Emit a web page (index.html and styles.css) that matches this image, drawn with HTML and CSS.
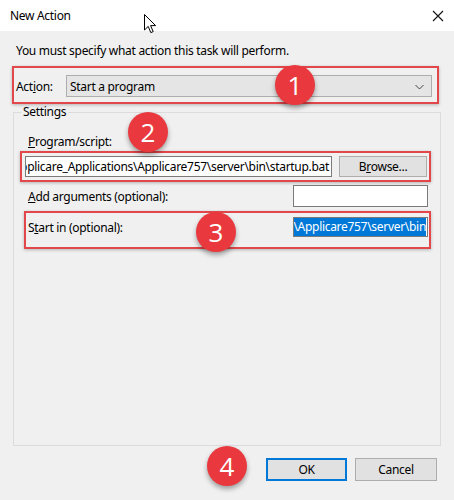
FILE: index.html
```html
<!DOCTYPE html>
<html>
<head>
<meta charset="utf-8">
<link rel="stylesheet" href="styles.css">
</head>
<body>
<div class="window">
  <div class="titlebar">
    <span class="title">New Action</span>
    <svg class="close" width="12" height="12" viewBox="0 0 12 12"><path d="M1 1 L11 11 M11 1 L1 11" stroke="#111" stroke-width="1.1" fill="none"/></svg>
  </div>
  <div class="content">
    <p class="intro">You must specify what action this task will perform.</p>
    <div class="annot annot-action">
      <span class="lbl">Act<u>i</u>on:</span>
      <div class="select">
        <span>Start a program</span>
        <svg class="chev" width="9" height="6" viewBox="0 0 9 6"><path d="M0.5 1 L4.5 5 L8.5 1" stroke="#444" stroke-width="1" fill="none"/></svg>
      </div>
    </div>
    <fieldset class="settings">
      <legend>Settings</legend>
      <div class="field-label"><u>P</u>rogram/script:</div>
      <div class="annot annot-program">
        <div class="textbox prog"><span>C:\Applicare_Applications\Applicare757\server\bin\startup.bat</span></div>
        <div class="btn browse">B<u>r</u>owse...</div>
      </div>
      <div class="row args">
        <span class="lbl"><u>A</u>dd arguments (optional):</span>
        <div class="textbox small"></div>
      </div>
      <div class="annot row startin">
        <span class="lbl">S<u>t</u>art in (optional):</span>
        <div class="textbox small sel"><span class="hl">C:\Applicare_Applications\Applicare757\server\bin</span></div>
      </div>
    </fieldset>
    <div class="buttons">
      <div class="btn ok">OK</div>
      <div class="btn cancel">Cancel</div>
    </div>
  </div>
  <div class="badge b1">1</div>
  <div class="badge b2">2</div>
  <div class="badge b3">3</div>
  <div class="badge b4">4</div>
  <svg class="cursor" width="13" height="20" viewBox="0 0 13 20"><path d="M0.5 0.5 L0.5 16 L4.2 12.4 L6.8 18.6 L9.2 17.6 L6.6 11.6 L11.6 11.6 Z" fill="#fff" stroke="#000" stroke-width="1"/></svg>
</div>
</body>
</html>
```

FILE: styles.css
```css
* { box-sizing: border-box; }
html, body { margin: 0; padding: 0; }
body {
  width: 454px;
  height: 500px;
  overflow: hidden;
  background: #f0f0f0;
  font-family: "Noto Sans", "Open Sans", sans-serif;
  font-size: 12px;
  letter-spacing: -0.3px;
  color: #000;
}
.window { position: relative; width: 454px; height: 500px; }
u { text-decoration: underline; text-underline-offset: 1px; }

.titlebar {
  height: 31px;
  background: #fff;
  display: flex;
  align-items: center;
  justify-content: space-between;
  padding: 0 10px 0 10px;
}
.title { font-size: 12px; line-height: 16px; }

.content { padding: 12px 0 0 12px; }
.intro { margin: 0 0 7px 4px; line-height: 16px; }

.annot {
  border: 2px solid #e2474b;
  box-shadow: 0 1px 3px rgba(0,0,0,0.25);
}
.annot-action {
  width: 427px;
  height: 38px;
  display: flex;
  align-items: center;
  padding: 2px 5px 0 2px;
}
.annot-action .lbl { width: 50px; }
.select {
  flex: 1;
  height: 22px;
  background: #e5e5e5;
  border: 1px solid #adadad;
  display: flex;
  align-items: center;
  justify-content: space-between;
  padding: 0 7px 0 3px;
}
.chev { margin-top: 1px; }

.settings {
  margin: 0 0 0 1px;
  width: 428px;
  border: 1px solid #dcdcdc;
  padding: 0 0 196px 0;
  min-width: 0;
}
.settings legend {
  margin-left: 7px;
  padding: 0 2px;
  line-height: 16px;
}
.field-label { margin: 14px 0 1px 14px; line-height: 16px; }

.annot-program {
  margin-left: 6px;
  width: 411px;
  height: 31px;
  display: flex;
  align-items: center;
  gap: 7px;
  padding: 0 2px 0 3px;
}
.textbox {
  background: #fff;
  border: 1px solid #7a7a7a;
  height: 21px;
  display: flex;
  justify-content: flex-end;
  align-items: center;
  overflow: hidden;
  white-space: nowrap;
  padding: 0 2px;
}
.prog { width: 307px; }
.btn {
  background: #e1e1e1;
  border: 1px solid #adadad;
  display: flex;
  align-items: center;
  justify-content: center;
  height: 21px;
}
.browse { width: 88px; }

.row { display: flex; align-items: center; justify-content: space-between; }
.args {
  margin: 3px 0 0 14px;
  width: 400px;
  height: 22px;
}
.args .textbox { width: 135px; height: 22px; }
.startin {
  margin: 4px 0 0 10px;
  width: 407px;
  height: 38px;
  padding: 2px 1px 8px 2px;
}
.startin .textbox { width: 135px; height: 20px; padding: 0 1px; }
.hl { background: #0078d7; color: #fff; line-height: 18px; }

.buttons {
  display: flex;
  justify-content: flex-end;
  gap: 8px;
  margin: 12px 17px 0 0;
}
.ok { width: 81px; height: 23px; border: 2px solid #0078d7; }
.cancel { width: 82px; height: 23px; }

.badge {
  position: absolute;
  width: 40px;
  height: 40px;
  border-radius: 50%;
  background: #e9393e;
  color: #fff;
  font-family: "Open Sans", "Noto Sans", sans-serif;
  font-size: 26px;
  letter-spacing: 0;
  line-height: 40px;
  text-align: center;
  box-shadow: 0 3px 5px rgba(0,0,0,0.35);
}
.b1 { left: 275px; top: 65px; }
.b2 { left: 128px; top: 112px; }
.b3 { left: 196px; top: 212px; }
.b4 { left: 207px; top: 446px; }

.cursor { position: absolute; left: 144px; top: 14px; }
```
